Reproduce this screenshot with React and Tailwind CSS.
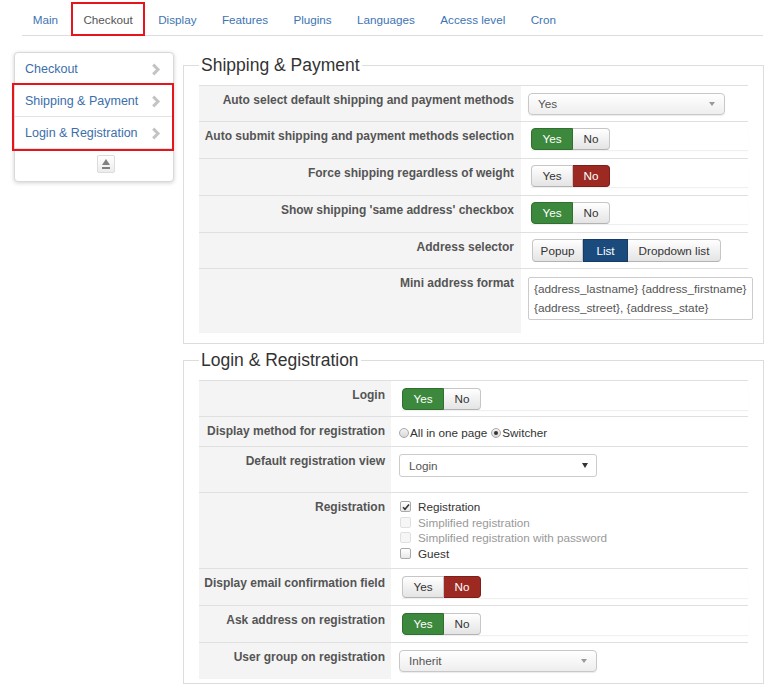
import React from "react";

const FONT = "font-['Liberation_Sans',Arial,sans-serif]";

function Toggle({ value }) {
  const off = "bg-linear-to-b from-white to-[#e4e4e4] text-[#333] border border-[#c6c6c6] border-b-[#b3b3b3]";
  const yesCls = value === "yes" ? "bg-[#3c883c] text-white border border-[#2f6f2f]" : off;
  const noCls = value === "no" ? "bg-[#9c2a23] text-white border border-[#7e1f19]" : off;
  return (
    <div className="flex ml-[3px] h-[22px] text-[11.7px] shadow-[0_1px_1px_rgba(0,0,0,0.06)]">
      <div className={`w-[42px] h-[22px] flex items-center justify-center rounded-l-[4px] ${yesCls}`}>Yes</div>
      <div className={`w-[37px] h-[22px] flex items-center justify-center rounded-r-[4px] border-l-0 ${noCls}`}>No</div>
    </div>
  );
}

function Chosen({ value, w }) {
  return (
    <div className={`${w} h-[22px] mt-[1px] flex items-center justify-between pl-[9px] pr-[9px] rounded-[4px] border border-[#c8c8c8] bg-linear-to-b from-white to-[#eeeeee] text-[11.7px] text-[#555] shadow-[0_1px_1px_rgba(0,0,0,0.08)]`}>
      <span>{value}</span>
      <span className="w-0 h-0 border-l-[3.5px] border-r-[3.5px] border-t-[4px] border-l-transparent border-r-transparent border-t-[#999]" />
    </div>
  );
}

function NativeSelect({ value }) {
  return (
    <div className="w-[198px] h-[23px] mt-[1px] flex items-center justify-between pl-[9px] pr-[8px] rounded-[3px] border border-[#cccccc] bg-white text-[11.7px] text-[#555]">
      <span>{value}</span>
      <span className="w-0 h-0 border-l-[3px] border-r-[3px] border-t-[5px] border-l-transparent border-r-transparent border-t-[#333]" />
    </div>
  );
}

function Row({ label, h, cols, pl, pr, border = true, children }) {
  return (
    <div className={`grid ${cols} ${h} ${border ? "border-t border-[#e0e0e0]" : ""}`}>
      <div className={`bg-[#f4f4f4] text-right font-bold text-[12px] leading-[14px] text-[#555] pt-[7px] ${pr} whitespace-nowrap`}>
        {label}
      </div>
      <div className={`pt-[6px] ${pl} bg-white`}>{children}</div>
    </div>
  );
}

function Radio({ checked }) {
  return (
    <span className="inline-flex w-[10px] h-[10px] rounded-full border border-[#a8a8a8] bg-linear-to-b from-[#f4f4f4] to-[#d8d8d8] items-center justify-center mr-[1px]">
      {checked && <span className="w-[4px] h-[4px] rounded-full bg-[#333]" />}
    </span>
  );
}

function Check({ state }) {
  if (state === "disabled") {
    return <span className="w-[11px] h-[11px] rounded-[2px] border border-[#e0e0e0] bg-[#f6f6f6] shrink-0" />;
  }
  return (
    <span className="w-[11px] h-[11px] rounded-[2px] border border-[#a9a9a9] bg-linear-to-b from-white to-[#e8e8e8] shrink-0 flex items-center justify-center">
      {state === "checked" && (
        <svg width="8" height="8" viewBox="0 0 8 8">
          <path d="M1 4.2 L3 6.2 L7 1.5" stroke="#333" strokeWidth="1.6" fill="none" />
        </svg>
      )}
    </span>
  );
}

function Chevron() {
  return (
    <svg width="10" height="13" viewBox="0 0 10 13" className="shrink-0">
      <path d="M2.2 1.6 L7 6.5 L2.2 11.4" stroke="#c4c4c4" strokeWidth="3" fill="none" />
    </svg>
  );
}

export default function App() {
  const tabs = ["Main", "Checkout", "Display", "Features", "Plugins", "Languages", "Access level", "Cron"];
  const c1 = "grid-cols-[322px_minmax(0,1fr)]";
  const c2 = "grid-cols-[192px_minmax(0,1fr)]";
  return (
    <div className={`${FONT} w-[768px] h-[691px] bg-white overflow-hidden`}>
      {/* Tabs */}
      <div className="ml-[22px] w-[741px] h-[36px] border-b border-[#dddddd] flex">
        <div className="-ml-[2px] flex">
          {tabs.map((t) => (
            <div
              key={t}
              className={`relative h-[35px] px-[12.7px] flex items-end pb-[8px] text-[11.7px] leading-[14px] ${
                t === "Checkout" ? "text-[#555]" : "text-[#3d74b2]"
              }`}
            >
              {t}
              {t === "Checkout" && (
                <div className="absolute left-0 right-0 top-[2px] -bottom-[1px] border-2 border-[#e8141b]" />
              )}
            </div>
          ))}
        </div>
      </div>

      <div className="flex items-start">
        {/* Sidebar */}
        <div className="relative ml-[14px] mt-[16px] w-[160px] border border-[#d9d9d9] rounded-[4px] bg-white shadow-[0_1px_4px_rgba(0,0,0,0.18)]">
          {["Checkout", "Shipping & Payment", "Login & Registration"].map((t) => (
            <div
              key={t}
              className="h-[32px] border-b border-[#e3e3e3] flex items-center justify-between pt-[2px] pl-[10px] pr-[12px] text-[12.5px] text-[#3b6eab]"
            >
              <span>{t}</span>
              <Chevron />
            </div>
          ))}
          <div className="h-[32px] pt-[6px] pl-[82px]">
            <div className="w-[18px] h-[18px] border border-[#dcdcdc] rounded-[2px] bg-linear-to-b from-white to-[#ececec] flex flex-col items-center justify-center gap-[2px]">
              <span className="w-0 h-0 border-l-[4px] border-r-[4px] border-b-[6px] border-l-transparent border-r-transparent border-b-[#808080]" />
              <span className="w-[8px] h-[1.5px] bg-[#808080]" />
            </div>
          </div>
          <div className="absolute -left-[3px] -right-[1px] top-[30px] h-[68px] border-2 border-[#e8141b]" />
        </div>

        {/* Content */}
        <div className="ml-[9px] mt-[19px] w-[581px]">
          <fieldset className="border border-[#dddddd] px-[15px] pb-[10px]">
            <legend className="px-[2px] text-[17.5px] leading-[20px] text-[#333]">Shipping &amp; Payment</legend>
            <div className="mt-[10px]">
              <Row cols={c1} h="h-[36px]" pl="pl-[7px]" pr="pr-[7px]" label="Auto select default shipping and payment methods">
                <Chosen value="Yes" w="w-[197px]" />
              </Row>
              <Row cols={c1} h="h-[37px]" pl="pl-[7px]" pr="pr-[7px]" label="Auto submit shipping and payment methods selection">
                <Toggle value="yes" />
              </Row>
              <Row cols={c1} h="h-[37px]" pl="pl-[7px]" pr="pr-[7px]" label="Force shipping regardless of weight">
                <Toggle value="no" />
              </Row>
              <Row cols={c1} h="h-[37px]" pl="pl-[7px]" pr="pr-[7px]" label="Show shipping 'same address' checkbox">
                <Toggle value="yes" />
              </Row>
              <Row cols={c1} h="h-[36px]" pl="pl-[7px]" pr="pr-[7px]" label="Address selector">
                <div className="flex ml-[4px] h-[23px] text-[11.7px]">
                  <div className="w-[51px] flex items-center justify-center rounded-l-[4px] border border-[#c6c6c6] border-b-[#b3b3b3] bg-linear-to-b from-white to-[#e4e4e4] text-[#333]">Popup</div>
                  <div className="w-[45px] flex items-center justify-center bg-[#1b4b7d] text-white border border-[#153c66]">List</div>
                  <div className="w-[93px] flex items-center justify-center rounded-r-[4px] border border-l-0 border-[#c6c6c6] border-b-[#b3b3b3] bg-linear-to-b from-white to-[#e4e4e4] text-[#333]">Dropdown list</div>
                </div>
              </Row>
              <Row cols={c1} h="h-[65px]" pl="pl-[7px]" pr="pr-[7px]" label="Mini address format">
                <div className="w-[225px] h-[43px] mt-[2px] border border-[#cccccc] rounded-[2px] pl-[5px] pt-[2px] text-[11.8px] leading-[19px] text-[#555] whitespace-nowrap">
                  <div>{"{address_lastname} {address_firstname}"}</div>
                  <div>{"{address_street}, {address_state}"}</div>
                </div>
              </Row>
            </div>
          </fieldset>

          <fieldset className="mt-[6px] border border-[#dddddd] px-[15px] pb-[4px]">
            <legend className="px-[2px] text-[17.5px] leading-[20px] text-[#333]">Login &amp; Registration</legend>
            <div className="mt-[10px]">
              <Row cols={c2} h="h-[36px]" pl="pl-[8px]" pr="pr-[6px]" label="Login">
                <div className="pt-[1px]"><Toggle value="yes" /></div>
              </Row>
              <Row cols={c2} h="h-[30px]" pl="pl-[8px]" pr="pr-[6px]" label="Display method for registration">
                <div className="flex items-center h-[16px] mt-[2px] text-[11.7px] text-[#333]">
                  <Radio checked={false} />
                  <span>All in one page</span>
                  <span className="w-[4px]" />
                  <Radio checked={true} />
                  <span>Switcher</span>
                </div>
              </Row>
              <Row cols={c2} h="h-[46px]" pl="pl-[8px]" pr="pr-[6px]" label="Default registration view">
                <NativeSelect value="Login" />
              </Row>
              <Row cols={c2} h="h-[76px]" pl="pl-[8px]" pr="pr-[6px]" label="Registration">
                <div className="flex flex-col text-[11.7px] leading-[15.5px] pl-[1px]">
                  {[
                    ["Registration", "checked", "text-[#333]"],
                    ["Simplified registration", "disabled", "text-[#999]"],
                    ["Simplified registration with password", "disabled", "text-[#999]"],
                    ["Guest", "unchecked", "text-[#333]"],
                  ].map(([t, s, c]) => (
                    <div key={t} className="flex items-center gap-[7px] h-[15.5px]">
                      <Check state={s} />
                      <span className={c}>{t}</span>
                    </div>
                  ))}
                </div>
              </Row>
              <Row cols={c2} h="h-[37px]" pl="pl-[8px]" pr="pr-[6px]" label="Display email confirmation field">
                <div className="pt-[1px]"><Toggle value="no" /></div>
              </Row>
              <Row cols={c2} h="h-[37px]" pl="pl-[8px]" pr="pr-[6px]" label="Ask address on registration">
                <div className="pt-[1px]"><Toggle value="yes" /></div>
              </Row>
              <Row cols={c2} h="h-[37px]" pl="pl-[8px]" pr="pr-[6px]" label="User group on registration">
                <Chosen value="Inherit" w="w-[198px]" />
              </Row>
            </div>
          </fieldset>
        </div>
      </div>
    </div>
  );
}
